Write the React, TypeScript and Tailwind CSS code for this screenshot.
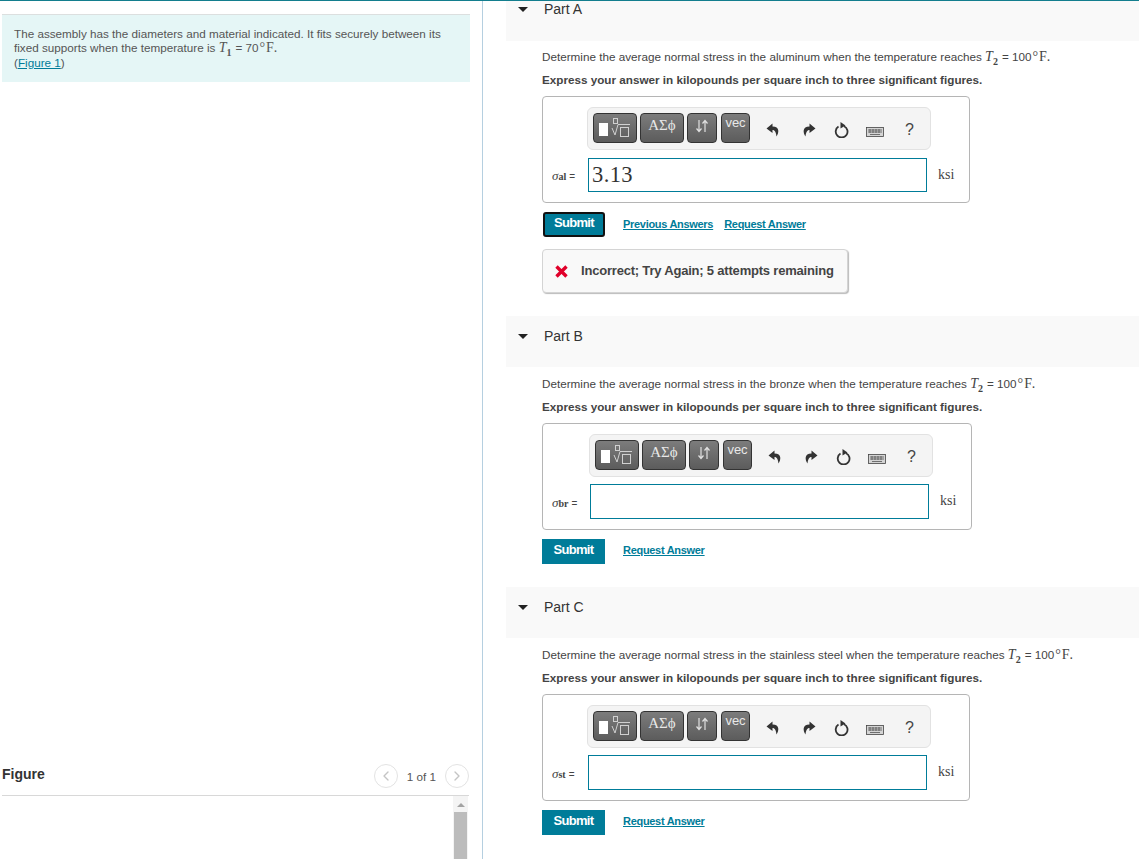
import React from 'react';
import { ChevronLeft, ChevronRight } from 'lucide-react';

const T = ({ n }: { n: number }) => (
  <span className="font-['Liberation_Serif',serif] mr-[4px]">
    <i className="text-[14px]">T</i>
    <sub className="text-[10px] font-bold align-[-1px] leading-none">{n}</sub>
  </span>
);

const Deg = () => (
  <span className="font-['Liberation_Serif',serif] text-[14px] tracking-[1px] ml-[1px]">°F.</span>
);

function Toolbar() {
  const btn =
    'h-[30px] rounded-[4px] border border-[#333] bg-gradient-to-b from-[#7c7c7c] to-[#5c5c5c] text-[#e8e8e8] flex items-center justify-center';
  return (
    <div className="h-[43px] w-[344px] rounded-[6px] border border-[#e2e2e2] bg-[#f4f4f4] flex items-center pl-[5px] pb-[2px]">
      <div className={`${btn} w-[44px] gap-[3px]`}>
        <span className="w-[9px] h-[13px] bg-white mt-[3px]" />
        <svg width="20" height="22" viewBox="0 0 20 22" fill="none" stroke="#d0d0d0">
          <rect x="2.5" y="1.5" width="4" height="5" />
          <path d="M1 11 L4 18 L7 7.5 H19" />
          <rect x="9.5" y="10.5" width="8" height="9" />
        </svg>
      </div>
      <div className={`${btn} w-[44px] ml-[3px] pb-[5px] font-['Liberation_Serif',serif] text-[15px]`}>ΑΣϕ</div>
      <div className={`${btn} w-[30px] ml-[3px] pb-[3px]`}>
        <svg width="14" height="14" viewBox="0 0 14 14" fill="none" stroke="#e0e0e0" strokeWidth="1.2">
          <path d="M4 1 V12 M1.5 9.5 L4 12.5 L6.5 9.5" />
          <path d="M10 13 V2 M7.5 4.5 L10 1.5 L12.5 4.5" />
        </svg>
      </div>
      <div className={`${btn} w-[29px] ml-[4px] pb-[9px] text-[13px]`}>vec</div>
      <div className="flex items-center ml-[16px] mt-[5px]">
        <svg width="14" height="14" viewBox="0 0 14 14" fill="#333">
          <path d="M6.5 0.5 L0.5 5.5 L6.5 10 V7 C9 7 10 9.5 10.5 13.5 C13 10 14 3.5 6.5 3.5 Z" />
        </svg>
        <svg className="ml-[22px]" width="14" height="14" viewBox="0 0 14 14" fill="#333">
          <path d="M7.5 0.5 L13.5 5.5 L7.5 10 V7 C5 7 4 9.5 3.5 13.5 C1 10 0 3.5 7.5 3.5 Z" />
        </svg>
        <svg className="ml-[18px]" width="15" height="16" viewBox="0 0 15 16" fill="none">
          <path d="M4.5 4.6 A5.9 5.9 0 1 0 10 4.2" stroke="#333" strokeWidth="1.8" />
          <path d="M6.5 0 L11.5 3.4 L6.5 6.5 Z" fill="#333" />
        </svg>
        <svg className="ml-[17px] mt-[3px]" width="18" height="10" viewBox="0 0 18 10" fill="#d4d4d4" stroke="#444" strokeWidth="0.8">
          <rect x="0.5" y="0.5" width="17" height="9" />
          <path d="M2 3 H16 M2 5 H16 M4 7.5 H14 M4 2 V6 M7 2 V6 M10 2 V6 M13 2 V6" strokeWidth="0.7" />
        </svg>
        <span className="ml-[21px] text-[16px] leading-none text-[#444]">?</span>
      </div>
    </div>
  );
}

function AnswerBox({
  sub,
  value,
  box,
  indent,
  row,
  input,
}: {
  sub: string;
  value?: string;
  box: string;
  indent: string;
  row: string;
  input: string;
}) {
  return (
    <div className={`${box} h-[107px] rounded-[4px] border border-[#b5b5b5] bg-white pt-[10px]`}>
      <div className={indent}>
        <Toolbar />
      </div>
      <div className={`flex items-center pl-[9px] ${row}`}>
        <span className="w-[36px] text-[#444] whitespace-nowrap font-['Liberation_Serif',serif]">
          <i className="text-[13px]">σ</i>
          <span className="text-[10px] font-bold">{sub}</span>
          <span className="ml-[3px] font-['Liberation_Sans',sans-serif] text-[10px]">=</span>
        </span>
        <div className={`${input} w-[339px] border border-[#007c99] flex items-center pl-[3px] text-[22.5px] tracking-[0.4px] text-[#333] font-['Liberation_Serif',serif]`}>
          {value}
        </div>
        <span className="ml-[11px] -mt-[2px] text-[14px] text-[#444] font-['Liberation_Serif',serif]">ksi</span>
      </div>
    </div>
  );
}

function PartHeader({ label, h }: { label: string; h: string }) {
  return (
    <div className={`${h} ml-[23px] bg-[#f9f9f9] flex items-start`}>
      <span className="ml-[12px] mt-[18px] w-0 h-0 border-x-[5px] border-x-transparent border-t-[5px] border-t-[#222]" />
      <span className="ml-[16px] mt-[12px] text-[14px] leading-[16px] text-[#333]">{label}</span>
    </div>
  );
}

function Question({ material }: { material: string }) {
  return (
    <div className="pl-[59px] text-[11.7px]">
      <p className="h-[18px] leading-[18px] text-[#444] whitespace-nowrap">
        Determine the average normal stress in the {material} when the temperature reaches <T n={2} />= 100
        <Deg />
      </p>
      <p className="mt-[5px] h-[18px] leading-[18px] font-bold text-[#444] whitespace-nowrap">
        Express your answer in kilopounds per square inch to three significant figures.
      </p>
    </div>
  );
}

function SubmitBtn({ focused }: { focused?: boolean }) {
  return (
    <button
      className={`h-[25px] bg-[#007c99] text-white text-[13px] font-semibold leading-none tracking-[-0.7px] ${
        focused ? 'w-[62px] ml-px pb-[4px] border-2 border-[#111] rounded-[3px]' : 'w-[63px] pb-[5px]'
      }`}
    >
      Submit
    </button>
  );
}

const LinkText = ({ children, cls }: { children: React.ReactNode; cls?: string }) => (
  <a className={`text-[#007c99] text-[11px] font-semibold underline leading-none tracking-[-0.3px] ${cls ?? ''}`}>{children}</a>
);

export default function App() {
  return (
    <div className="h-[859px] w-[1139px] overflow-hidden bg-white font-['Liberation_Sans',sans-serif] border-t border-[#137e8e] flex">
      <div className="w-[483px] h-full border-r border-[#b5cfe0] flex flex-col shrink-0">
        <div className="mt-[13px] ml-[2px] w-[468px] h-[68px] bg-[#e5f6f6] border-t border-[#dcdfdf] pl-[12px] pt-[12px] text-[11.7px] leading-[14px] text-[#555]">
          <p>The assembly has the diameters and material indicated. It fits securely between its</p>
          <p>
            fixed supports when the temperature is <T n={1} />= 70
            <Deg />
          </p>
          <p>
            (<a className="text-[#007c99] underline">Figure 1</a>)
          </p>
        </div>
        <div className="mt-[681px] ml-[2px] w-[467px] h-[33px] border-b border-[#d8d8d8] flex items-start">
          <span className="mt-[3px] font-bold text-[14px] leading-[16px] text-[#333]">Figure</span>
          <div className="ml-auto mt-[1px] flex items-center">
            <span className="w-[24px] h-[24px] rounded-full border border-[#e3e3e3] flex items-center justify-center text-[#c4c4c4]">
              <ChevronLeft size={16} />
            </span>
            <span className="ml-[9px] mt-[2px] text-[11.7px] text-[#555]">1 of 1</span>
            <span className="ml-[9px] w-[24px] h-[24px] rounded-full border border-[#e3e3e3] flex items-center justify-center text-[#c4c4c4]">
              <ChevronRight size={16} />
            </span>
          </div>
        </div>
        <div className="ml-[453px] w-[15px] flex-1 bg-[#f4f4f4] flex flex-col items-center">
          <span className="mt-[7px] w-0 h-0 border-x-[4px] border-x-transparent border-b-[4px] border-b-[#a3a3a3]" />
          <span className="mt-[5px] w-[13px] flex-1 bg-[#bcbcbc]" />
        </div>
      </div>

      <div className="flex-1 min-w-0">
        {/* panel is scrolled, top of Part A's header is cut off */}
        <div className="-mt-[12px]">
          <PartHeader label="Part A" h="h-[52px]" />
        </div>
        <div className="mt-[7px]">
          <Question material="aluminum" />
        </div>
        <div className="ml-[59px] mt-[7px]">
          <AnswerBox sub="al" value="3.13" box="w-[428px]" indent="pl-[44px]" row="mt-[8px]" input="h-[34px]" />
        </div>
        <div className="ml-[59px] mt-[9px] flex items-center">
          <SubmitBtn focused />
          <LinkText cls="ml-[18px]">Previous Answers</LinkText>
          <LinkText cls="ml-[11px]">Request Answer</LinkText>
        </div>
        <div className="ml-[59px] mt-[12px] w-[306px] h-[44px] rounded-[4px] border border-[#d4d4d4] bg-[#f9f9f9] shadow-[1px_1px_1px_#bbb] flex items-center pl-[12px]">
          <svg width="13" height="13" viewBox="0 0 13 13" stroke="#e0002a" strokeWidth="3.4">
            <path d="M1.5 1.5 L11.5 11.5 M11.5 1.5 L1.5 11.5" />
          </svg>
          <span className="ml-[13px] text-[13px] font-semibold text-[#444] tracking-[-0.2px] whitespace-nowrap">
            Incorrect; Try Again; 5 attempts remaining
          </span>
        </div>

        <div className="mt-[23px]">
          <PartHeader label="Part B" h="h-[51px]" />
        </div>
        <div className="mt-[8px]">
          <Question material="bronze" />
        </div>
        <div className="ml-[59px] mt-[7px]">
          <AnswerBox sub="br" box="w-[430px]" indent="pl-[46px]" row="mt-[7px]" input="ml-[2px] h-[35px]" />
        </div>
        <div className="ml-[59px] mt-[9px] flex items-center">
          <SubmitBtn />
          <LinkText cls="ml-[18px] -mt-[2px]">Request Answer</LinkText>
        </div>

        <div className="mt-[23px]">
          <PartHeader label="Part C" h="h-[51px]" />
        </div>
        <div className="mt-[8px]">
          <Question material="stainless steel" />
        </div>
        <div className="ml-[59px] mt-[7px]">
          <AnswerBox sub="st" box="w-[428px]" indent="pl-[44px]" row="mt-[7px]" input="h-[35px]" />
        </div>
        <div className="ml-[59px] mt-[9px] flex items-center">
          <SubmitBtn />
          <LinkText cls="ml-[18px] -mt-[2px]">Request Answer</LinkText>
        </div>
      </div>
    </div>
  );
}
